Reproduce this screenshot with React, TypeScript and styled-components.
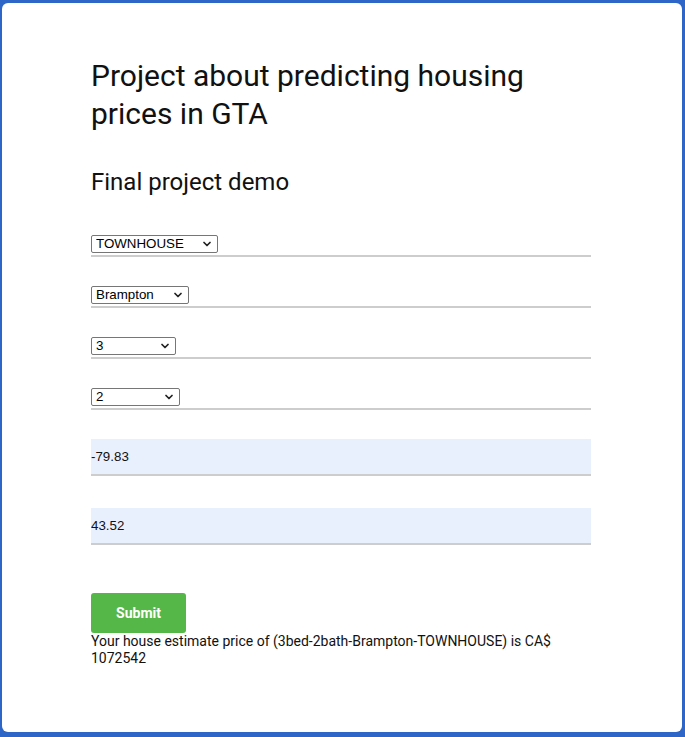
import React, { useState } from 'react';
import styled, { createGlobalStyle } from 'styled-components';
import { ChevronDown } from 'lucide-react';

const GlobalStyle = createGlobalStyle`
  html, body {
    margin: 0;
    padding: 0;
    height: 100%;
  }
  body {
    font-family: Roboto, 'Liberation Sans', sans-serif;
    color: #111;
  }
  #root {
    height: 100%;
  }
`;

const Frame = styled.div`
  box-sizing: border-box;
  height: 100vh;
  background: #2e66c8;
  padding: 3px 3px 5px 2px;
`;

const Panel = styled.main`
  box-sizing: border-box;
  height: 100%;
  background: #fff;
  border-radius: 6px;
  padding: 54px 91px 0 89px;
`;

const Title = styled.h1`
  margin: 0;
  font-size: 30px;
  font-weight: 400;
  line-height: 38px;
  color: #111;
`;

const Subtitle = styled.h2`
  margin: 34px 0 0;
  font-size: 24px;
  font-weight: 400;
  line-height: 30px;
  color: #111;
`;

const Form = styled.form`
  display: flex;
  flex-direction: column;
  margin-top: 38px;
`;

const Field = styled.div`
  border-bottom: 2px solid #cdcdcd;
  padding-bottom: 2px;
  margin-bottom: 29px;
`;

const SelectWrap = styled.div<{ $width: number }>`
  position: relative;
  width: ${(p) => p.$width}px;
  height: 18px;
`;

const Select = styled.select`
  appearance: none;
  display: block;
  box-sizing: border-box;
  width: 100%;
  height: 18px;
  margin: 0;
  padding: 0 0 0 4px;
  border: 1px solid #767676;
  border-radius: 2px;
  background: #fff;
  font-family: 'Liberation Sans', Arial, sans-serif;
  font-size: 13.33px;
  line-height: 16px;
  color: #000;
  outline: none;
`;

const Chevron = styled(ChevronDown)`
  position: absolute;
  right: 5px;
  top: 3px;
  pointer-events: none;
`;

const Input = styled.input`
  display: block;
  box-sizing: border-box;
  width: 100%;
  height: 37px;
  margin: 0 0 32px;
  padding: 0;
  border: none;
  border-bottom: 2px solid #cdcdcd;
  background: #e8f0fe;
  font-family: 'Liberation Sans', Arial, sans-serif;
  font-size: 13.33px;
  color: #111;
  outline: none;
`;

const Button = styled.button`
  align-self: flex-start;
  width: 95px;
  height: 40px;
  margin-top: 16px;
  border: none;
  border-radius: 3px;
  background: #55b748;
  color: #fff;
  font-family: Roboto, 'Liberation Sans', sans-serif;
  font-size: 14px;
  font-weight: 700;
  cursor: pointer;
`;

const Result = styled.p`
  margin: 0;
  font-size: 14px;
  line-height: 17px;
  color: #111;
`;

type Option = { name: string; width: number; value: string; options: string[] };

const selects: Option[] = [
  { name: 'type', width: 127, value: 'TOWNHOUSE', options: ['TOWNHOUSE', 'CONDO', 'DETACHED', 'SEMI-DETACHED'] },
  { name: 'city', width: 98, value: 'Brampton', options: ['Brampton', 'Toronto', 'Mississauga', 'Markham'] },
  { name: 'beds', width: 85, value: '3', options: ['1', '2', '3', '4', '5'] },
  { name: 'baths', width: 89, value: '2', options: ['1', '2', '3', '4'] },
];

export default function App() {
  const [values, setValues] = useState<Record<string, string>>(
    Object.fromEntries(selects.map((s) => [s.name, s.value]))
  );
  const [lng, setLng] = useState('-79.83');
  const [lat, setLat] = useState('43.52');

  return (
    <>
      <GlobalStyle />
      <Frame>
        <Panel>
          <Title>Project about predicting housing prices in GTA</Title>
          <Subtitle>Final project demo</Subtitle>
          <Form onSubmit={(e) => e.preventDefault()}>
            {selects.map((s) => (
              <Field key={s.name}>
                <SelectWrap $width={s.width}>
                  <Select
                    value={values[s.name]}
                    onChange={(e) => setValues({ ...values, [s.name]: e.target.value })}
                  >
                    {s.options.map((o) => (
                      <option key={o}>{o}</option>
                    ))}
                  </Select>
                  <Chevron size={12} strokeWidth={3.5} color="#222" />
                </SelectWrap>
              </Field>
            ))}
            <Input value={lng} onChange={(e) => setLng(e.target.value)} />
            <Input value={lat} onChange={(e) => setLat(e.target.value)} />
            <Button type="submit">Submit</Button>
            <Result>
              Your house estimate price of (3bed-2bath-Brampton-TOWNHOUSE) is CA$ 1072542
            </Result>
          </Form>
        </Panel>
      </Frame>
    </>
  );
}
